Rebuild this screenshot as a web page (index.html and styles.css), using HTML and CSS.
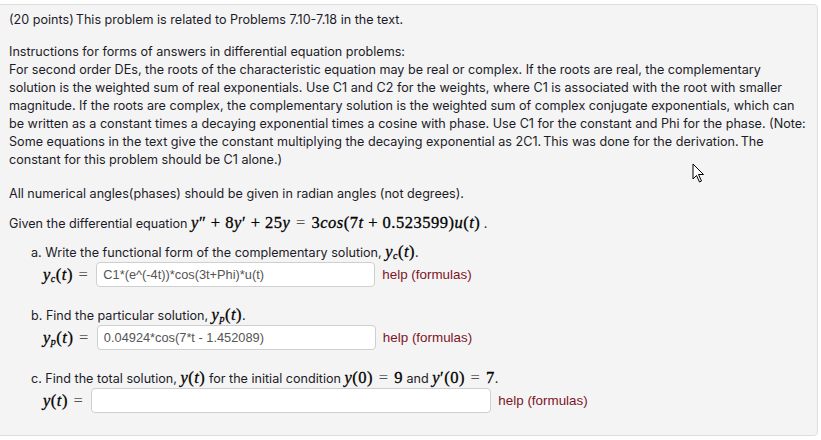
FILE: index.html
```html
<!DOCTYPE html>
<html lang="en">
<head>
    <meta charset="UTF-8">
    <title>Problem 7.10-7.18</title>
    <link rel="stylesheet" href="styles.css">
</head>
<body>
    <div class="problem">
        <p>(20 points)<span class="lead">This problem is related to Problems 7.10-7.18 in the text.</span></p>

        <p class="instructions">Instructions for forms of answers in differential equation problems:<br>
        For second order DEs, the roots of the characteristic equation may be real or complex. If the roots are real, the complementary<br>
        solution is the weighted sum of real exponentials. Use C1 and C2 for the weights, where C1 is associated with the root with smaller<br>
        magnitude. If the roots are complex, the complementary solution is the weighted sum of complex conjugate exponentials, which can<br>
        be written as a constant times a decaying exponential times a cosine with phase. Use C1 for the constant and Phi for the phase. (Note:<br>
        Some equations in the text give the constant multiplying the decaying exponential as 2C1.<span class="lead">This was done for the derivation.</span><span class="lead">The</span><br>
        constant for this problem should be C1 alone.)</p>

        <p class="angles">All numerical angles(phases) should be given in radian angles (not degrees).</p>

        <p class="given">Given the differential equation
            <span class="math"><i>y</i>″ + 8<i>y</i>′ + 25<i>y</i> <span class="eq">=</span> 3<i>cos</i>(7<i>t</i> + 0.523599)<i>u</i>(<i>t</i>)</span> .</p>

        <!-- part a -->
        <div class="part">
            <div class="question">a. Write the functional form of the complementary solution, <span class="math"><i>y</i><sub><i>c</i></sub>(<i>t</i>)</span>.</div>
            <div class="answer">
                <span class="math label"><i>y</i><sub><i>c</i></sub>(<i>t</i>) <span class="eq">=</span></span>
                <input class="field" type="text" value="C1*(e^(-4t))*cos(3t+Phi)*u(t)">
                <a class="help" href="#">help (formulas)</a>
            </div>
        </div>

        <!-- part b -->
        <div class="part">
            <div class="question">b. Find the particular solution, <span class="math"><i>y</i><sub><i>p</i></sub>(<i>t</i>)</span>.</div>
            <div class="answer">
                <span class="math label"><i>y</i><sub><i>p</i></sub>(<i>t</i>) <span class="eq">=</span></span>
                <input class="field" type="text" value="0.04924*cos(7*t - 1.452089)">
                <a class="help" href="#">help (formulas)</a>
            </div>
        </div>

        <!-- part c -->
        <div class="part">
            <div class="question">c. Find the total solution, <span class="math"><i>y</i>(<i>t</i>)</span> for the initial condition <span class="math"><i>y</i>(0) <span class="eq">=</span> 9</span> and <span class="math"><i>y</i>′(0) <span class="eq">=</span> 7</span>.</div>
            <div class="answer">
                <span class="math label"><i>y</i>(<i>t</i>) <span class="eq">=</span></span>
                <input class="field wide" type="text" value="">
                <a class="help" href="#">help (formulas)</a>
            </div>
        </div>

        <svg class="cursor" width="14" height="21" viewBox="0 0 14 21">
            <path d="M1 1 L1 16 L4.5 12.5 L7.5 19 L9.5 18 L6.5 11.5 L11.5 11.5 Z" fill="#fff" stroke="#000" stroke-width="1" stroke-linejoin="round"/>
        </svg>
    </div>
</body>
</html>
```

FILE: styles.css
```css
body { margin: 0; background: #fff; font-family: Inter, Roboto, "Liberation Sans", sans-serif; font-size: 12.6px; color: #1c1c28; }

.problem {
    position: relative;
    margin: 4px 3px 0 -3px;
    padding: 6px 4px 22px 11px;
    background: #f4f4f4;
    border: 1px solid #dedede;
    border-radius: 4px;
    line-height: 18px;
    white-space: nowrap;
}
.problem p { margin: 0 0 14px 0; }
.problem p.instructions { margin-bottom: 16px; }
.problem p.angles { margin-bottom: 11px; }
.problem p.given { margin-bottom: 10px; }
.lead { margin-left: 2px; }

.math { font-family: "Liberation Serif", serif; font-size: 16.5px; letter-spacing: 0.5px; color: #000; -webkit-text-stroke: 0.3px #000; }
.math sub { font-size: 10px; vertical-align: -2px; line-height: 0; }
.math .eq { margin: 0 1px; color: #555; -webkit-text-stroke: 0; }

.part { padding-left: 22px; }
.part + .part { margin-top: 19px; }
.answer { display: flex; align-items: center; height: 25px; padding-left: 12px; }
.label { margin-right: 7px; }
.field {
    box-sizing: border-box;
    width: 279px;
    height: 25px;
    padding: 0 6px;
    border: 1px solid #cfcfcf;
    border-radius: 4px;
    background: #fff;
    font-family: "Liberation Sans", Arial, sans-serif;
    font-size: 12.8px;
    color: #555;
}
.field.wide { width: 400px; }
.help { margin-left: 7px; font-family: "Liberation Sans", Arial, sans-serif; font-size: 13.4px; color: #7d1426; text-decoration: none; }

.cursor { position: absolute; left: 694px; top: 158px; }
```
